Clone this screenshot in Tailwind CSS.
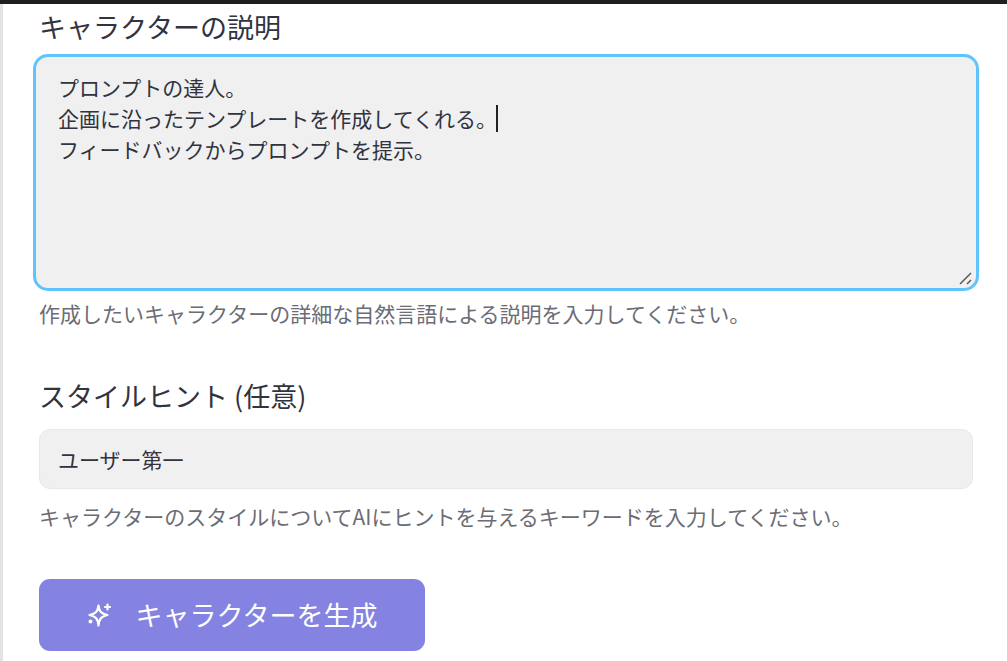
<!DOCTYPE html>
<html lang="ja">
<head>
<meta charset="utf-8">
<script src="https://cdn.jsdelivr.net/npm/@tailwindcss/browser@4"></script>
</head>
<body class="bg-white overflow-hidden">
<div class="w-[1007px] h-[661px] overflow-hidden flex flex-col font-['Noto_Sans_CJK_JP','Noto_Sans',sans-serif]">
  <div class="h-[4px] shrink-0 bg-[#1f1f1f]"></div>
  <div class="flex-1 flex min-h-0">
    <div class="w-[3px] shrink-0 bg-[#e3e3e3]"></div>
    <main class="pl-[36px] w-[970px] shrink-0 flex flex-col">
      <label class="block text-[27px] leading-[36px] text-[#31333f] h-[36px] mt-[5px]">キャラクターの説明</label>
      <div class="relative mt-[9px] -mx-[6px] h-[237px] rounded-[15px] border-[3px] border-[#5fc4fb] bg-[#f0f0f0] pl-[22px] pt-[15px] text-[21px] leading-[31px] text-[#31333f]">
        <div>プロンプトの達人。</div>
        <div class="flex items-center">企画に沿ったテンプレートを作成してくれる。<span class="-ml-[1px] w-[2px] h-[27px] bg-[#222]"></span></div>
        <div>フィードバックからプロンプトを提示。</div>
        <svg class="absolute right-[3px] bottom-[3px]" width="14" height="14" viewBox="0 0 14 14" fill="none" stroke="#555" stroke-width="1.5"><path d="M1 13 L12 2"/><path d="M8 13 L12 9"/></svg>
      </div>
      <p class="mt-[7px] text-[21px] leading-[30px] text-[#6b6c74]">作成したいキャラクターの詳細な自然言語による説明を入力してください。</p>
      <label class="block mt-[50px] text-[27px] leading-[36px] text-[#31333f]">スタイルヒント (任意)</label>
      <div class="mt-[15px] h-[60px] rounded-[11px] border border-[#e8e8e8] bg-[#f0f0f0] pl-[18px] pt-px flex items-center text-[21px] text-[#31333f]">ユーザー第一</div>
      <p class="mt-[12px] text-[21px] leading-[30px] text-[#6b6c74]">キャラクターのスタイルについてAIにヒントを与えるキーワードを入力してください。</p>
      <button class="mt-[48px] w-[386px] h-[72px] rounded-[11px] bg-[#8583e1] text-white flex items-center justify-center gap-[25px] text-[27px]">
        <svg width="24" height="24" viewBox="0 0 24 24" fill="none" stroke="#fff" stroke-width="2.2" stroke-linejoin="round" stroke-linecap="round"><path d="M11.5 2.5 C12.3 8.4 14 10.6 20.5 12 C14 13.4 12.3 15.6 11.5 22.5 C10.7 15.6 9 13.4 2.5 12 C9 10.6 10.7 8.4 11.5 2.5Z"/><path d="M20.5 1.5v5M18 4h5"/><circle cx="3.5" cy="18.5" r="0.9" fill="#fff"/></svg>
        <span>キャラクターを生成</span>
      </button>
    </main>
  </div>
</div>
</body>
</html>
